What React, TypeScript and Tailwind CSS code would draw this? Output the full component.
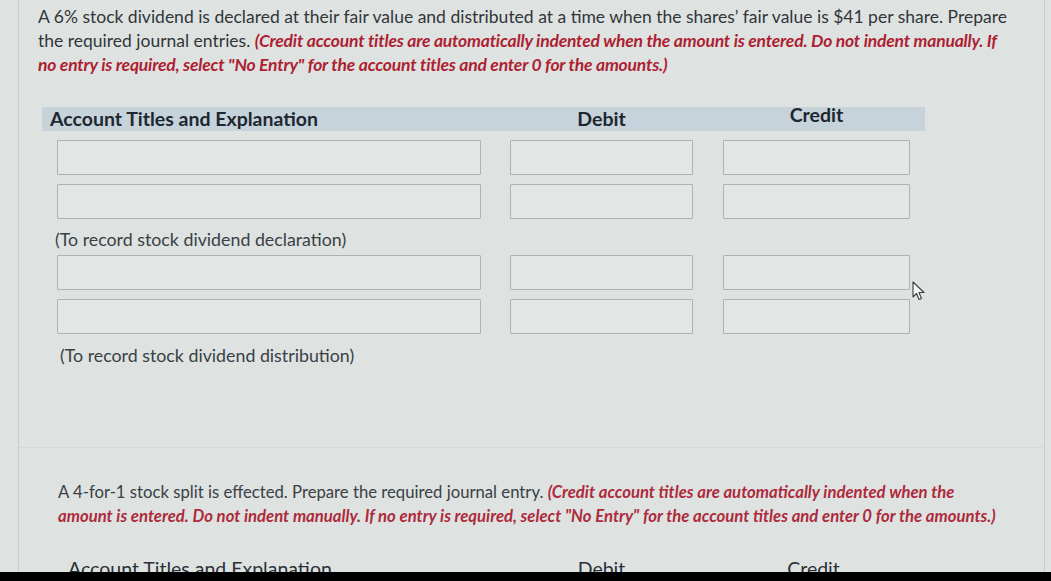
import React from "react";

const inputCls = "h-[35px] border border-[#aeb3b2] bg-[#e2e6e4] rounded-[1px]";

function EntryRow() {
    return (
        <div className="grid grid-cols-[453px_213px_217px]">
            <div className="pl-[15px]"><div className={`w-[424px] ${inputCls}`} /></div>
            <div className="pl-[15px]"><div className={`w-[183px] ${inputCls}`} /></div>
            <div className="pl-[15px]"><div className={`w-[187px] ${inputCls}`} /></div>
        </div>
    );
}

function Cursor() {
    return (
        <svg className="absolute left-[912px] top-[281px]" width="13" height="20" viewBox="0 0 13 20">
            <path d="M1 1 L1 16 L4.5 12.5 L7 18.5 L9.5 17.5 L7 11.5 L12 11.5 Z" fill="#f4f6f5" stroke="#3a3f42" strokeWidth="1.1" strokeLinejoin="round" />
        </svg>
    );
}

export default function App() {
    return (
        <div className="relative w-[1051px] h-[581px] overflow-hidden bg-black font-['Lato','Open_Sans',sans-serif]">
            <div className="h-[572px] bg-[#dee3e1] overflow-hidden">
                <div className="ml-[18px] w-[1027px] h-full border-l border-r border-[#c8cdcb] pl-[19px]">
                    <div className="pt-[5px] text-[17.5px] leading-[24px] text-[#30363a] whitespace-nowrap">
                        <div>A 6% stock dividend is declared at their fair value and distributed at a time when the shares’ fair value is $41 per share. Prepare</div>
                        <div>
                            the required journal entries.{" "}
                            <span className="italic font-bold tracking-[-0.2px] text-[#ae1f33]">(Credit account titles are automatically indented when the amount is entered. Do not indent manually. If</span>
                        </div>
                        <div className="italic font-bold tracking-[-0.2px] text-[#ae1f33]">no entry is required, select "No Entry" for the account titles and enter 0 for the amounts.)</div>
                    </div>

                    <div className="mt-[30px] ml-[4px] w-[883px]">
                        <div className="grid grid-cols-[453px_213px_217px] h-[24px] bg-[#c6d3db] text-[19.5px] leading-[24px] font-bold text-[#1e2730] whitespace-nowrap">
                            <div className="pl-[8px]">Account Titles and Explanation</div>
                            <div className="text-center">Debit</div>
                            <div className="text-center -mt-[4px]">Credit</div>
                        </div>

                        <div className="mt-[9px] flex flex-col gap-[9px]">
                            <EntryRow />
                            <EntryRow />
                        </div>
                        <div className="mt-[8px] pl-[13px] text-[17.8px] leading-[24px] text-[#3a4045]">(To record stock dividend declaration)</div>

                        <div className="mt-[4px] flex flex-col gap-[9px]">
                            <EntryRow />
                            <EntryRow />
                        </div>
                        <div className="mt-[9px] pl-[18px] text-[17.8px] leading-[24px] text-[#3a4045]">(To record stock dividend distribution)</div>
                    </div>

                    <div className="mt-[80px] -ml-[19px] border-t border-[#d5dad8]" />

                    <div className="mt-[32px] pl-[20px] text-[16.7px] leading-[24px] text-[#3a4045] whitespace-nowrap">
                        <div>
                            A 4-for-1 stock split is effected. Prepare the required journal entry.{" "}
                            <span className="italic font-bold text-[#ae2a3c]">(Credit account titles are automatically indented when the</span>
                        </div>
                        <div className="italic font-bold text-[#ae2a3c]">amount is entered. Do not indent manually. If no entry is required, select "No Entry" for the account titles and enter 0 for the amounts.)</div>
                    </div>

                    <div className="mt-[29px] ml-[4px] w-[883px] grid grid-cols-[453px_213px_217px] text-[19.5px] leading-[24px] text-[#2a3138] whitespace-nowrap">
                        <div className="pl-[26px]">Account Titles and Explanation</div>
                        <div className="text-center">Debit</div>
                        <div className="text-center -ml-[6px]">Credit</div>
                    </div>
                </div>
            </div>
            <Cursor />
        </div>
    );
}
